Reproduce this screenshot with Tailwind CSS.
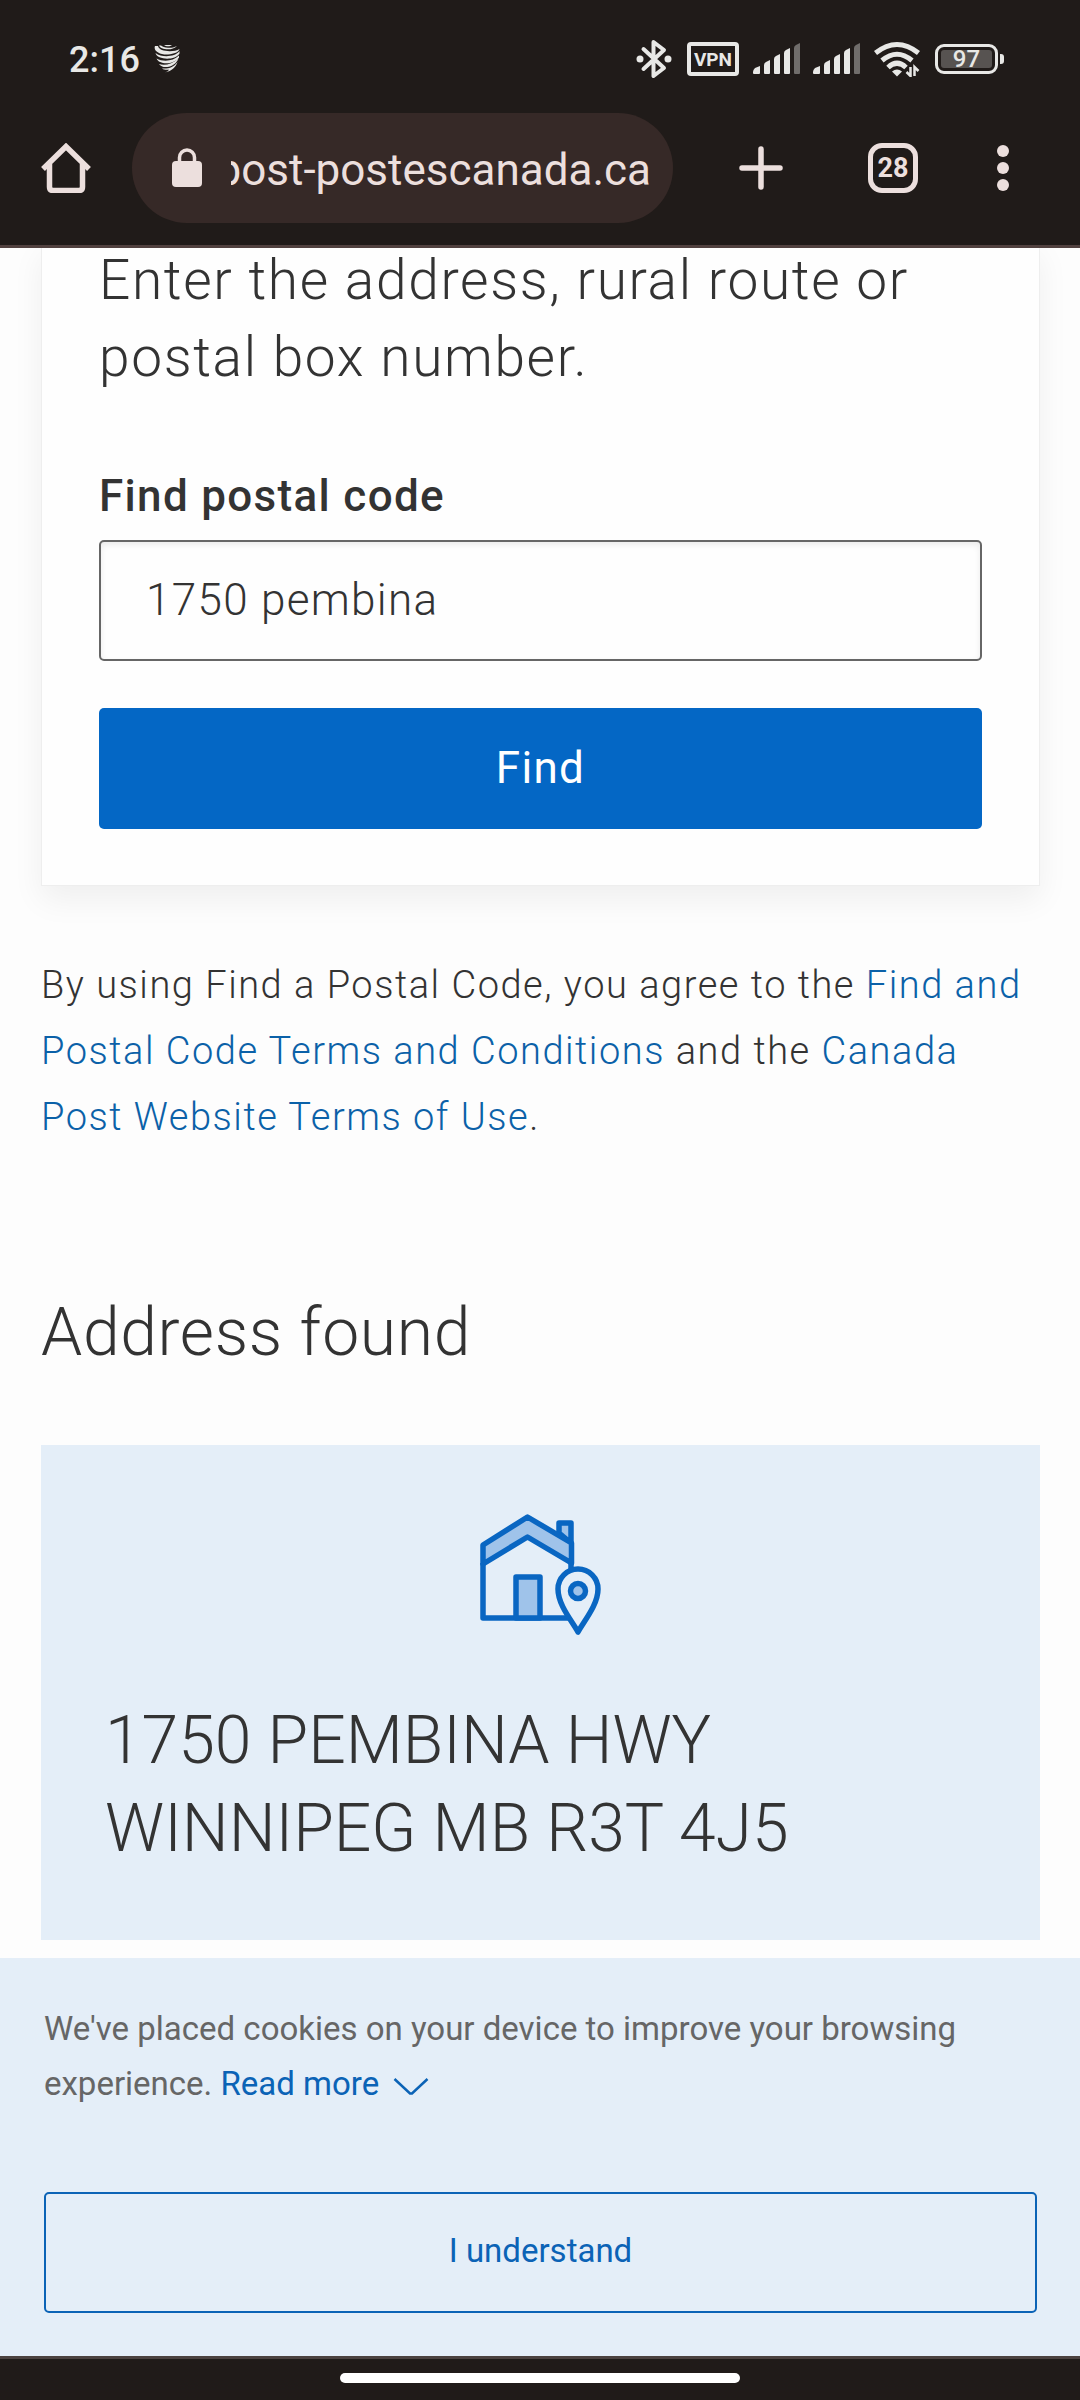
<!DOCTYPE html>
<html lang="en">
<head>
<meta charset="utf-8">
<meta name="viewport" content="width=device-width, initial-scale=1">
<title>Find a Postal Code</title>
<script src="https://cdn.jsdelivr.net/npm/@tailwindcss/browser@4"></script>
</head>
<body class="flex min-h-screen flex-col bg-[#fdfdfd] font-['Roboto',sans-serif] text-[#333333]">

<header class="relative z-10 border-b-[3px] border-[#51413f] bg-[#201b19] pt-[39px] pb-[22px]">
  <!-- Status bar -->
  <div class="flex h-10 items-center pr-[76px] pl-[69px] text-[#e8e8e6]">
    <span class="pt-[2px] text-[36px] leading-10 font-medium">2:16</span>
    <svg class="ml-[14px] h-7 w-[26px]" viewBox="0 0 26 28" fill="currentColor" aria-hidden="true">
      <path d="M1 1C-1 6 6 10 14 9.500 20 9 25 7 25.500 4 20 7.500 5 7 4 1z"/>
      <path d="M5 .5c1 4 13 6 18 .5-3 1.500-6 2-9 1.800C11 2.500 8 1.500 7 .5z"/>
      <path d="M10 0c2 1.800 6 1.800 8 0z"/>
      <path d="M1.500 8C3 15 21 16 25.500 8.500V6C21 12 8 13 1.500 8z"/>
      <path d="M2.500 13.500C5 20 20 20 25 12.500V10.500C19 16.500 9 17 2.500 13.500z"/>
      <path d="M5 19c3 5 14 4 18.500-3.500l1-2C18 19.500 10 21 5 19z"/>
      <path d="M11 27.500C18 26 22 22 23.500 17 20 22 15 24 8 23.500c2 1.500 5 1.500 7 1.200-1 1.300-2.500 2.200-4 2.800z"/>
    </svg>
    <div class="ml-auto flex items-center">
      <svg class="h-10 w-9" viewBox="0 0 36 40" aria-label="Bluetooth" role="img">
        <path d="M7.500 10 28 29 17.500 37V3L28 11 7.500 30" fill="none" stroke="currentColor" stroke-width="4" stroke-linejoin="round" stroke-linecap="round"/>
        <circle cx="4" cy="20" r="3.500" fill="currentColor"/><circle cx="32" cy="20" r="3.500" fill="currentColor"/>
      </svg>
      <span class="ml-[15px] flex h-[34px] w-[52px] items-center justify-center rounded-[4px] border-4 border-current text-[19px] leading-none font-bold">VPN</span>
      <svg class="ml-[14px] h-8 w-12" viewBox="0 0 48 32" fill="currentColor" aria-label="Signal" role="img">
        <path d="M0 29q0-2 2-4l5-2v7q0 1-1 1H1q-1 0-1-1z"/><path d="M11 22q0-2 2-3l4-2v13q0 1-1 1h-4q-1 0-1-1z"/><path d="M21 16q0-2 2-3l4-2v19q0 1-1 1h-4q-1 0-1-1z"/><path d="M31 10q0-2 2-3l4-2v25q0 1-1 1h-4q-1 0-1-1z"/><path d="M41 5q0-2 2-3l4-2v30q0 1-1 1h-4q-1 0-1-1z" opacity=".4"/>
      </svg>
      <svg class="ml-3 h-8 w-12" viewBox="0 0 48 32" fill="currentColor" aria-label="Signal" role="img">
        <path d="M0 29q0-2 2-4l5-2v7q0 1-1 1H1q-1 0-1-1z"/><path d="M11 22q0-2 2-3l4-2v13q0 1-1 1h-4q-1 0-1-1z"/><path d="M21 16q0-2 2-3l4-2v19q0 1-1 1h-4q-1 0-1-1z"/><path d="M31 10q0-2 2-3l4-2v25q0 1-1 1h-4q-1 0-1-1z"/><path d="M41 5q0-2 2-3l4-2v30q0 1-1 1h-4q-1 0-1-1z" opacity=".4"/>
      </svg>
      <svg class="ml-[13px] h-9 w-[46px]" viewBox="0 0 46 36" fill="none" stroke="currentColor" aria-label="Wi-Fi" role="img">
        <path d="M1.500 12Q23-5 44.500 12" stroke-width="5"/>
        <path d="M8 19.500Q23 7 38 19.500" stroke-width="5"/>
        <path d="M14 26.500Q23 18 32 26.500" stroke-width="5"/>
        <path d="M18 30.500q5-4 10 0l-5 5z" fill="currentColor" stroke="none"/>
        <path d="M36.500 26v9l-4-4M40.500 35v-9l4 4" stroke-width="2.500"/>
      </svg>
      <div class="ml-[15px] flex items-center gap-[2px]">
        <span class="h-[30px] w-[63px] rounded-[9px] border-[3px] border-current p-[3px]">
          <span class="flex h-full items-center justify-center rounded-[3px] bg-[#575351] text-[24px] leading-none font-medium">97</span>
        </span>
        <span class="h-[10px] w-1 rounded-r-[3px] bg-current"></span>
      </div>
    </div>
  </div>

  <!-- Browser toolbar -->
  <div class="mt-[34px] flex items-center pr-[71px] pl-[41px] text-[#ecdfdd]">
    <button type="button" aria-label="Home">
      <svg class="block h-[50px] w-[50px]" viewBox="0 0 50 50" fill="none" stroke="currentColor" stroke-width="5.500">
        <path d="M8.500 21v23q0 3.500 3.500 3.500h26q3.500 0 3.500-3.500V21" /><path d="M2 26 25 3.500 48 26"/>
      </svg>
    </button>
    <button type="button" class="ml-[41px] flex h-[110px] min-w-0 flex-1 items-center rounded-full bg-[#362927] pr-[22px] pl-10">
      <svg class="h-10 w-[30px] shrink-0" viewBox="0 0 30 40" aria-hidden="true">
        <rect y="13" width="30" height="26" rx="4" fill="currentColor"/>
        <path d="M7.500 15V9.500a7.500 7.500 0 0 1 15 0V15" fill="none" stroke="currentColor" stroke-width="3.500"/>
      </svg>
      <span class="ml-[29px] flex min-w-0 flex-1 justify-end overflow-hidden pt-1 text-[44px] leading-[56px] whitespace-nowrap">canadapost-postescanada.ca</span>
    </button>
    <button type="button" aria-label="New tab" class="ml-[66px]">
      <svg class="block h-11 w-11" viewBox="0 0 44 44" stroke="currentColor" stroke-width="5.500" stroke-linecap="round"><path d="M22 3v38M3 22h38"/></svg>
    </button>
    <button type="button" aria-label="Tabs" class="ml-[85px] flex h-[50px] w-[50px] items-center justify-center rounded-[14px] border-[5px] border-current text-[27px] leading-none font-bold">28</button>
    <button type="button" aria-label="Menu" class="ml-[79px]">
      <svg class="block h-[46px] w-3" viewBox="0 0 12 46" fill="currentColor"><circle cx="6" cy="6" r="6"/><circle cx="6" cy="23" r="6"/><circle cx="6" cy="40" r="6"/></svg>
    </button>
  </div>
</header>

<main class="flex-1 pr-10 pl-[41px]">
  <form class="-mt-[7px] border border-[#eeeeee] bg-[#fefefe] px-[57px] pb-14 shadow-[0_14px_30px_rgba(0,0,0,0.06)]">
    <p class="text-[55px] leading-[77px] font-light tracking-[0.03em]">Enter the address, rural route or postal box number.</p>
    <label for="address" class="mt-[72px] block text-[44px] leading-[56px] font-medium tracking-[0.03em]">Find postal code</label>
    <input id="address" type="text" value="1750 pembina" class="mt-4 block h-[121px] w-full rounded-[5px] border-2 border-[#666666] bg-[#fefefe] px-[45px] pb-[2px] text-[44px] font-light tracking-[0.03em] inset-shadow-[0_3px_6px_rgba(0,0,0,0.08)]">
    <button type="button" class="mt-[47px] block h-[121px] w-full rounded-[5px] bg-[#0467c5] pb-[2px] text-[44px] tracking-[0.03em] text-white">Find</button>
  </form>

  <p class="mt-[66px] text-[38px] leading-[66px] font-light tracking-[0.04em]">By using Find a Postal Code, you agree to the <a href="#" class="text-[#0b61a8]">Find and Postal Code Terms and Conditions</a> and the <a href="#" class="text-[#0b61a8]">Canada Post Website Terms of Use</a>.</p>

  <h2 class="mt-[139px] text-[66px] leading-[88px] font-light tracking-[0.01em]">Address found</h2>

  <section class="mt-[68px] bg-[#e4eef8] px-16 pt-[68px] pb-[67px]">
    <svg class="mx-auto block h-[122px] w-[122px]" viewBox="0 0 122 122" fill="none" stroke="#0966c2" stroke-width="5.500" stroke-linejoin="round" aria-hidden="true">
      <path d="M79 20V10h12v20z" fill="#9fc3ea"/>
      <path d="M3 32 47.500 4 91.500 30v20L47.500 24 3 51z" fill="#9fc3ea"/>
      <path d="M3 50v55h88V48" />
      <path d="M36 105V64h24v41z" fill="#9fc3ea"/>
      <path d="M98 119C92 108 78 92 78 76a20 20 0 0 1 40 0c0 16-14 32-20 43z" fill="#e4eef8"/>
      <circle cx="98" cy="78" r="7.500" fill="#9fc3ea"/>
    </svg>
    <p class="mt-[62px] text-[66px] leading-[88px] font-light">1750 PEMBINA HWY<br>WINNIPEG MB R3T 4J5</p>
  </section>
</main>

<aside class="mt-[18px] bg-[#e4eef8] pt-[43px] pr-[43px] pb-[43px] pl-11">
  <p class="text-[33px] leading-[55px] text-[#666666]">We've placed cookies on your device to improve your browsing experience. <a href="#" class="text-[#0b63b6]">Read more <svg class="ml-[6px] inline-block h-[18px] w-9 align-[-1px]" viewBox="0 0 36 18" fill="none" stroke="currentColor" stroke-width="2.500" aria-hidden="true"><path d="M1.500 1 17 15.500h2L34.500 1"/></svg></a></p>
  <button type="button" class="mt-[81px] block h-[121px] w-full rounded-[5px] border-2 border-[#0b63b6] pb-1 text-[33px] text-[#0b63b6]">I understand</button>
</aside>

<footer class="flex h-11 items-center justify-center border-t-[3px] border-[#4b4240] bg-[#201b19] pb-[3px]">
  <div class="h-[10px] w-[37%] rounded-full bg-white"></div>
</footer>
</body>
</html>
